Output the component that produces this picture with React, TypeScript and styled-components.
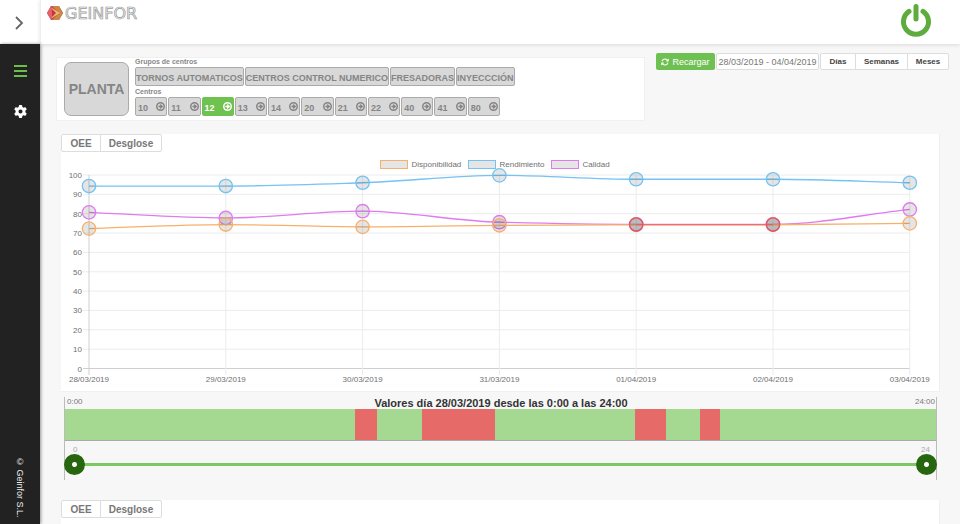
import React, { useState } from "react";
import styled, { createGlobalStyle, css } from "styled-components";
import { CircleArrowRight } from "lucide-react";
import { FaGear, FaArrowsRotate } from "react-icons/fa6";

const GlobalStyle = createGlobalStyle`
  *, *::before, *::after { box-sizing: border-box; }
  body {
    margin: 0;
    background: #f7f7f7;
    color: #777;
    font-family: "Liberation Sans", Arial, sans-serif;
    overflow: hidden;
  }
  button, input { font-family: inherit; margin: 0; }
`;

const Page = styled.div`
  display: grid;
  grid-template-columns: 40px minmax(0, 1fr);
  grid-template-rows: 44px minmax(0, 1fr);
  height: 100vh;
`;

const SidebarToggle = styled.button`
  display: grid;
  place-items: center;
  padding: 2px 0 0;
  border: 0;
  background: #fff;
`;

const Header = styled.header`
  display: flex;
  justify-content: space-between;
  align-items: flex-start;
  padding: 4px 28px 0 6px;
  background: #fff;
  border-left: 1px solid #eee;
  box-shadow: 0 1px 4px rgba(0, 0, 0, 0.12);
  z-index: 1;
`;

const LogoLink = styled.a`
  display: block;
  height: 20px;
`;

const PowerButton = styled.button`
  display: block;
  padding: 0;
  border: 0;
  background: none;
  height: 34px;
`;

const Sidebar = styled.nav`
  display: flex;
  flex-direction: column;
  align-items: center;
  padding: 20px 0 6px;
  gap: 26px;
  background: #222;
  box-shadow: 1px 0 3px rgba(0, 0, 0, 0.4);
  z-index: 2;
`;

const NavButton = styled.button`
  display: grid;
  place-items: center;
  width: 16px;
  height: 14px;
  padding: 0;
  border: 0;
  background: none;
  color: #fff;
  font-size: 13px;
`;

const Copyright = styled.small`
  margin-top: auto;
  writing-mode: vertical-rl;
  font-size: 9px;
  line-height: 12px;
  color: #eee;
`;

const Main = styled.main`
  min-width: 0;
  overflow: hidden;
  padding: 9px 11px 0 16px;
`;

const TopRow = styled.div`
  display: flex;
  align-items: flex-start;
  gap: 11px;
`;

const FilterCard = styled.section`
  display: flex;
  flex: 1;
  gap: 6px;
  margin-top: 4px;
  padding: 4px 7px;
  height: 64px;
  background: #fff;
  border: 1px solid #f0f0f0;
`;

const grey = css`
  background: #d8d8d8;
  border: 1px solid #aaa;
  color: #858585;
`;

const PlantButton = styled.button`
  ${grey}
  width: 65px;
  height: 54px;
  padding: 0;
  border-radius: 7px;
  font-size: 14px;
  font-weight: bold;
`;

const FilterGroups = styled.div`
  display: flex;
  flex-direction: column;
`;

const GroupLabel = styled.h2`
  margin: -4px 0 1px;
  font-size: 7px;
  line-height: 8px;
  font-weight: bold;
  color: #888;
`;

const ButtonRow = styled.div`
  display: flex;
  gap: 1px;
  margin-bottom: 6px;
`;

const GroupButton = styled.button`
  ${grey}
  height: 19px;
  padding: 2px 0 0;
  border-radius: 2px;
  font-size: 9px;
  font-weight: bold;
  white-space: nowrap;
`;

const CenterRow = styled.div`
  display: grid;
  grid-template-columns: repeat(11, 1fr);
  gap: 1px;
  width: 365px;
`;

const CenterButton = styled.button<{ $active?: boolean }>`
  ${grey}
  display: flex;
  align-items: center;
  justify-content: space-between;
  height: 19px;
  padding: 0 1px 0 2px;
  border-radius: 2px;
  font-size: 9px;
  font-weight: bold;
  ${(p) => p.$active && css`
    background: #6fc24f;
    border-color: #6fc24f;
    color: #fff;
  `}
  span { padding-top: 2px; }
`;

const Toolbar = styled.div`
  display: flex;
  height: 17px;
  gap: 1px;
`;

const ReloadButton = styled.button`
  display: flex;
  align-items: center;
  justify-content: center;
  gap: 3px;
  width: 59px;
  padding: 0;
  border: 0;
  border-radius: 2px;
  background: #6fc052;
  color: #fff;
  font-size: 9px;
  svg { width: 8px; height: 8px; }
`;

const DateInput = styled.input`
  width: 103px;
  padding: 0;
  border: 1px solid #ddd;
  border-radius: 2px;
  background: #fff;
  color: #777;
  font-size: 9px;
  text-align: center;
`;

const Segmented = styled.div`
  display: flex;
  width: max-content;
`;

const SegmentButton = styled.button<{ $width: number; $large?: boolean }>`
  width: ${(p) => p.$width}px;
  height: ${(p) => (p.$large ? 18 : 17)}px;
  padding: 0;
  border: 1px solid #ddd;
  background: #fff;
  color: ${(p) => (p.$large ? "#777" : "#444")};
  font-size: ${(p) => (p.$large ? 10 : 8)}px;
  font-weight: bold;
  & + & { margin-left: -1px; }
  &:first-child { border-radius: 2px 0 0 2px; }
  &:last-child { border-radius: 0 2px 2px 0; }
`;

const Content = styled.div`
  margin: 13px 9px 0 5px;
`;

const Panel = styled.section`
  background: #fff;
  box-shadow: inset -1px -1px #f0f0f0;
  min-height: 60px;
`;

const Chart = styled.svg`
  display: block;
  width: 100%;
  height: auto;
  font-family: "Liberation Sans", Arial, sans-serif;
  font-size: 8px;
  fill: #707070;
`;

const Timeline = styled.section`
  margin: 5px 3px 20px;
  padding-bottom: 3px;
  border: solid #bbb;
  border-width: 0 1px;
`;

const TimelineHead = styled.div`
  display: grid;
  grid-template-columns: 1fr auto 1fr;
  height: 12px;
  padding: 0 1px 0 2px;
  font-size: 8px;
  line-height: 10px;
`;

const TimelineTitle = styled.h2`
  margin: 0;
  font-size: 11px;
  line-height: 12px;
  color: #333;
`;

const EndLabel = styled.span`
  text-align: right;
`;

const Bar = styled.div`
  display: flex;
  height: 32px;
  border-bottom: 1px solid #aaa;
`;

const Segment = styled.div<{ $size: number; $stopped: boolean }>`
  flex: ${(p) => p.$size} 1 0;
  background: ${(p) => (p.$stopped ? "#e66a67" : "#a5d890")};
`;

const RangeLabels = styled.div`
  display: flex;
  justify-content: space-between;
  height: 10px;
  padding: 4px 6px 0 8px;
  font-size: 8px;
  line-height: 10px;
  color: #aaa;
`;

const Range = styled.div`
  position: relative;
  display: flex;
  align-items: center;
  height: 26px;
  margin: 0 -1px;
  &::before {
    content: "";
    flex: 1;
    height: 3px;
    margin: 0 10px;
    background: #7cc862;
  }
`;

const RangeInput = styled.input`
  position: absolute;
  inset: 0;
  width: 100%;
  height: 100%;
  appearance: none;
  background: none;
  pointer-events: none;
  &::-webkit-slider-thumb {
    appearance: none;
    width: 21px;
    height: 21px;
    border-radius: 50%;
    border: 0;
    background: radial-gradient(circle, #fff 2px, #28650f 3px);
    pointer-events: auto;
  }
`;

const groups = ["TORNOS AUTOMATICOS", "CENTROS CONTROL NUMERICO", "FRESADORAS", "INYECCCIÓN"];
const centers = ["10", "11", "12", "13", "14", "20", "21", "22", "40", "41", "80"];
const days = ["28/03/2019", "29/03/2019", "30/03/2019", "31/03/2019", "01/04/2019", "02/04/2019", "03/04/2019"];
const series = [
  { name: "Disponibilidad", color: "#f7b06a", values: [72.3, 74.4, 73.2, 74, 74.2, 74.3, 75], legendX: 319.5 },
  { name: "Rendimiento", color: "#74c3f2", values: [94.3, 94.3, 96, 99.8, 97.8, 97.8, 96], legendX: 407.5 },
  { name: "Calidad", color: "#e07af0", values: [80.7, 77.8, 81.3, 75.6, 74.5, 74.5, 82.2], legendX: 490.5 },
];
const segments = [290, 22, 45, 73, 140, 31, 34, 20, 216];

const px = (i: number) => 28 + i * 136.8;
const py = (v: number) => 216.5 - v * 1.935;

/* Monotone cubic through the daily values. */
function curve(v: number[]) {
  const d = v.slice(1).map((n, i) => n - v[i]);
  const m = v.map((_, i) => {
    if (i === 0) return d[0];
    if (i === v.length - 1) return d[i - 1];
    return d[i - 1] * d[i] <= 0 ? 0 : (2 * d[i - 1] * d[i]) / (d[i - 1] + d[i]);
  });
  return v.reduce((path, n, i) => {
    if (i === 0) return `M${px(0)} ${py(n)}`;
    const t = 136.8 / 3;
    return `${path} C${px(i - 1) + t} ${py(v[i - 1] + m[i - 1] / 3)} ${px(i) - t} ${py(n - m[i] / 3)} ${px(i)} ${py(n)}`;
  }, "");
}

function OeeChart() {
  const ticks = Array.from({ length: 11 }, (_, i) => i * 10);
  return (
    <Chart viewBox="0 0 879 240" role="img" aria-label="Disponibilidad, Rendimiento, Calidad">
      {series.map((s) => (
        <g key={s.name}>
          <rect x={s.legendX} y="8.5" width="27" height="8" fill="#e5e5e5" stroke={s.color} />
          <text x={s.legendX + 31} y="15">{s.name}</text>
        </g>
      ))}
      {ticks.map((t) => (
        <g key={t}>
          <path d={`M22 ${py(t)}H849`} stroke={t ? "#ececec" : "#cfcfcf"} />
          <text x="21" y={py(t) + 3} textAnchor="end">{t}</text>
        </g>
      ))}
      {days.map((d, i) => (
        <g key={d}>
          <path d={`M${px(i)} ${py(100)}V223`} stroke={i ? "#ececec" : "#cfcfcf"} />
          <text x={px(i)} y="230" textAnchor="middle">{d}</text>
        </g>
      ))}
      {[...series].reverse().map((s) => (
        <g key={s.name} stroke={s.color} fill="none">
          <path d={curve(s.values)} strokeWidth="1.3" />
          {s.values.map((v, i) => (
            <circle key={i} cx={px(i)} cy={py(v)} r="6.7" fill="#000" fillOpacity="0.1" strokeWidth="1.3" />
          ))}
        </g>
      ))}
      <path d={`M${px(4)} ${py(74.4)}H${px(5)}`} stroke="#ee6b78" strokeWidth="1.3" />
      {[4, 5].map((i) => (
        <circle key={i} cx={px(i)} cy={py(74.4)} r="6.7" fill="#000" fillOpacity="0.08" stroke="#dc5470" strokeWidth="1.3" />
      ))}
    </Chart>
  );
}

function ViewTabs() {
  return (
    <Segmented>
      <SegmentButton $large $width={40}>OEE</SegmentButton>
      <SegmentButton $large $width={62}>Desglose</SegmentButton>
    </Segmented>
  );
}

function Logo() {
  return (
    <svg width="94" height="20" viewBox="0 0 94 20" role="img" aria-label="GEINFOR">
      <path d="M4 2h8l4 7-4 7H4L0 9z" fill="#cf3f4c" />
      <path d="M4 2l4 7-4 7H4L0 9z" fill="#e0636b" />
      <path d="M5 2h7l4 7-4 7H5l7-7z" fill="#c98645" />
      <path d="M5 4l8 5-8 5z" fill="#e9b872" />
      <path d="M5 5l4 4-4 4z" fill="#c9323f" />
      <text x="18" y="15" fontSize="16" fontFamily="DejaVu Sans, sans-serif" fontWeight="400" fill="#eee" stroke="#999" strokeWidth="0.7">GEINFOR</text>
    </svg>
  );
}

export default function App() {
  const [active, setActive] = useState("12");
  const [period, setPeriod] = useState("28/03/2019 - 04/04/2019");
  return (
    <>
      <GlobalStyle />
      <Page>
        <SidebarToggle aria-label="Abrir menú">
          <svg width="12" height="16" viewBox="0 0 12 16" fill="none" stroke="#666" strokeWidth="1.8"><path d="M2 2l6 6-6 6" /></svg>
        </SidebarToggle>
        <Header>
          <LogoLink href="#"><Logo /></LogoLink>
          <PowerButton aria-label="Salir">
            <svg width="32" height="34" viewBox="0 0 32 34" fill="none" stroke="#5dac3d" strokeWidth="5" strokeLinecap="round">
              <path d="M9 7.4A12.5 12.5 0 1 0 23 7.4M16 2.5v12.5" />
            </svg>
          </PowerButton>
        </Header>
        <Sidebar>
          <NavButton aria-label="Listado">
            <svg width="13" height="12" viewBox="0 0 13 12" stroke="#6abf4b" strokeWidth="2"><path d="M0 1h13M0 6h13M0 11h13" /></svg>
          </NavButton>
          <NavButton aria-label="Configuración"><FaGear /></NavButton>
          <Copyright>© Geinfor S.L.</Copyright>
        </Sidebar>
        <Main>
          <TopRow>
            <FilterCard>
              <PlantButton>PLANTA</PlantButton>
              <FilterGroups>
                <GroupLabel>Grupos de centros</GroupLabel>
                <ButtonRow>
                  {groups.map((g) => <GroupButton key={g}>{g}</GroupButton>)}
                </ButtonRow>
                <GroupLabel>Centros</GroupLabel>
                <CenterRow>
                  {centers.map((c) => (
                    <CenterButton key={c} $active={c === active} onClick={() => setActive(c)}>
                      <span>{c}</span>
                      <CircleArrowRight size={9} strokeWidth={4} />
                    </CenterButton>
                  ))}
                </CenterRow>
              </FilterGroups>
            </FilterCard>
            <Toolbar>
              <ReloadButton><FaArrowsRotate />Recargar</ReloadButton>
              <DateInput aria-label="Periodo" value={period} onChange={(e) => setPeriod(e.target.value)} />
              <Segmented>
                <SegmentButton $width={36}>Días</SegmentButton>
                <SegmentButton $width={53}>Semanas</SegmentButton>
                <SegmentButton $width={42}>Meses</SegmentButton>
              </Segmented>
            </Toolbar>
          </TopRow>
          <Content>
            <Panel>
              <ViewTabs />
              <OeeChart />
            </Panel>
            <Timeline>
              <TimelineHead>
                <span>0:00</span>
                <TimelineTitle>Valores día 28/03/2019 desde las 0:00 a las 24:00</TimelineTitle>
                <EndLabel>24:00</EndLabel>
              </TimelineHead>
              <Bar>
                {segments.map((s, i) => <Segment key={i} $size={s} $stopped={i % 2 === 1} />)}
              </Bar>
              <RangeLabels><span>0</span><span>24</span></RangeLabels>
              <Range>
                <RangeInput type="range" min={0} max={24} defaultValue={0} aria-label="Hora inicial" />
                <RangeInput type="range" min={0} max={24} defaultValue={24} aria-label="Hora final" />
              </Range>
            </Timeline>
            <Panel>
              <ViewTabs />
            </Panel>
          </Content>
        </Main>
      </Page>
    </>
  );
}
